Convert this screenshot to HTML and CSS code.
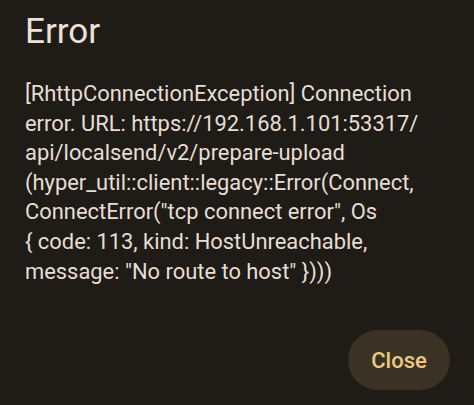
FILE: index.html
```html
<!DOCTYPE html>
<html>
<head>
<meta charset="utf-8">
<link rel="stylesheet" href="styles.css">
</head>
<body>
<div class="dialog">
  <h1 class="title">Error</h1>
  <p class="message">[RhttpConnectionException] Connection error. URL: https://192.168.1.101:53317/ api/localsend/v2/prepare-upload (hyper_util::client::legacy::Error(Connect, ConnectError("tcp connect error", Os {&nbsp;code: 113, kind: HostUnreachable, message: "No route to host" })))</p>
  <div class="actions">
    <button class="close">Close</button>
  </div>
</div>
</body>
</html>
```
FILE: styles.css
```css
html, body {
  margin: 0;
  padding: 0;
  background: #1f1b17;
  width: 474px;
  height: 405px;
  overflow: hidden;
}
.dialog {
  padding: 10px 24px 0 25px;
  font-family: Roboto, "Liberation Sans", sans-serif;
}
.title {
  margin: 0;
  font-size: 35px;
  font-weight: 400;
  line-height: 44px;
  color: #ece1d6;
}
.message {
  margin: 25px 0 0 0;
  font-size: 21.9px;
  line-height: 29.6px;
  color: #e6ded5;
  width: 400px;
}
.actions {
  display: flex;
  justify-content: flex-end;
  margin-top: 44px;
}
.close {
  width: 102px;
  height: 60px;
  border: none;
  border-radius: 30px;
  background: #3a3225;
  color: #ecc97f;
  font-family: Roboto, "Liberation Sans", sans-serif;
  font-size: 22px;
  font-weight: 500;
  padding: 0;
}
```
